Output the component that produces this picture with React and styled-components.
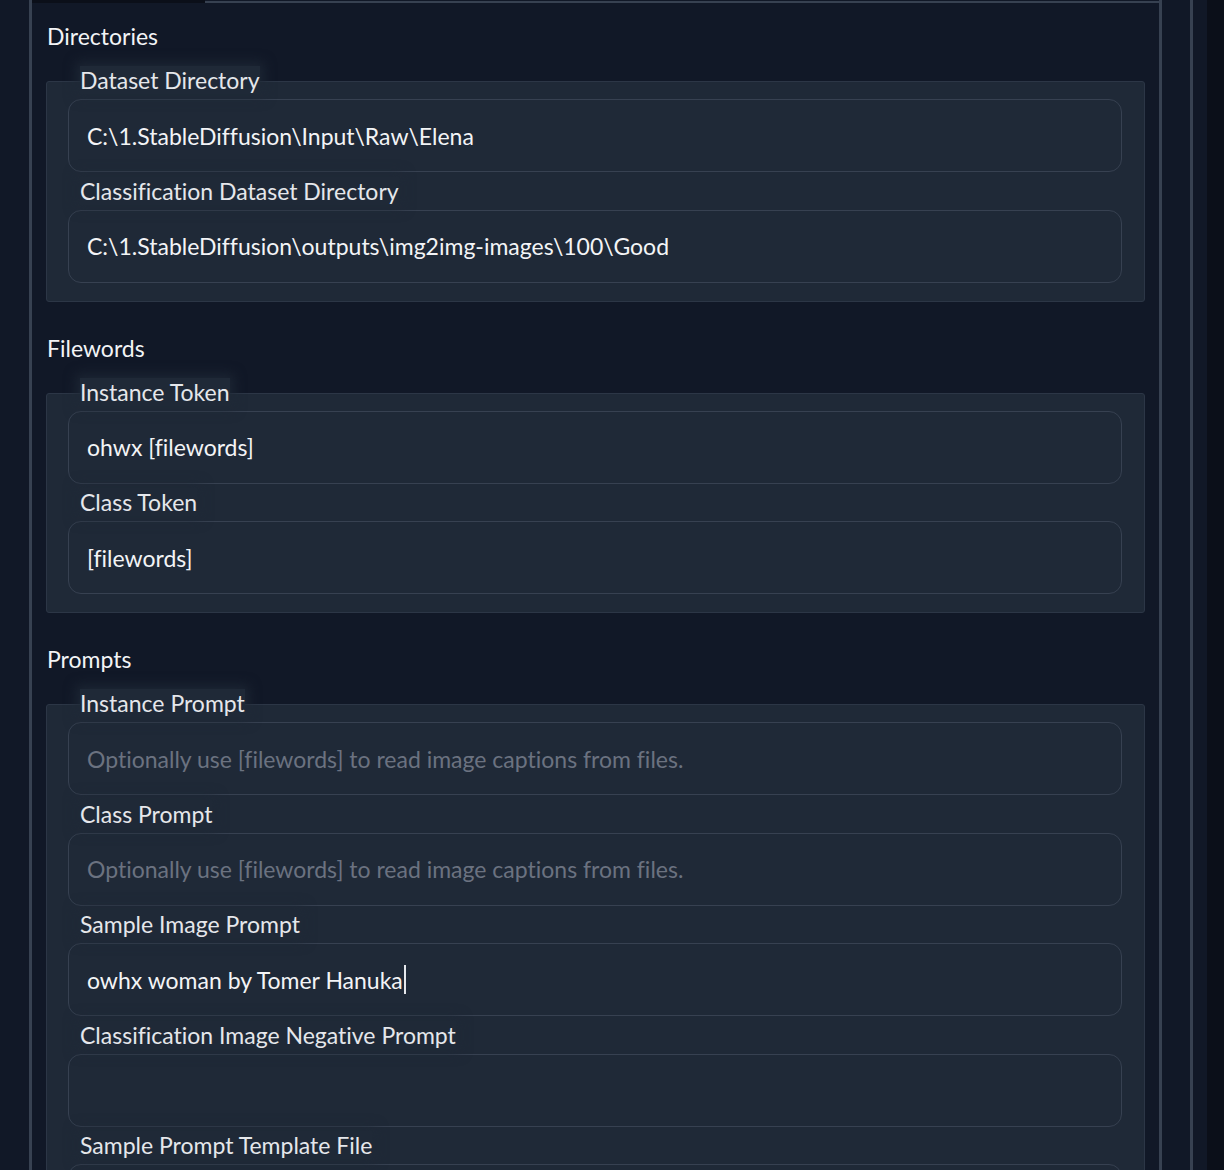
import React from 'react'
import styled, { createGlobalStyle } from 'styled-components'

const GlobalStyle = createGlobalStyle`
  html, body {
    margin: 0;
    padding: 0;
    background: #0b0f19;
    overflow: hidden;
  }
  body {
    font-family: Lato, "Noto Sans", sans-serif;
    font-variant-ligatures: none;
    -webkit-font-smoothing: antialiased;
  }
`

const Shell = styled.div`
  width: 1207px;
  height: 1170px;
  background: #111827;
`

const Frame = styled.div`
  width: 1193px;
  height: 100%;
  box-sizing: border-box;
  padding: 0 28px 0 29px;
  border-right: 3px solid #374151;
`

const TabBody = styled.div`
  height: 100%;
  border-left: 3px solid #374151;
  border-right: 3px solid #374151;
`

const TabHeader = styled.div`
  display: flex;
  height: 3px;
`

const ActiveTab = styled.div`
  width: 173px;
  background: #0b0f19;
`

const TabRule = styled.div`
  flex: 1;
  margin-top: 1px;
  background: #374151;
`

const Content = styled.div`
  padding: 18px 14px 0;
`

const Section = styled.section`
  & + & {
    margin-top: 31px;
  }
`

const SectionTitle = styled.h2`
  margin: 0;
  padding-left: 1px;
  font-size: 23px;
  line-height: 30px;
  font-weight: 400;
  color: #f3f4f6;
`

const Panel = styled.div`
  margin-top: 30px;
  padding: 0 22px 18px 21px;
  background: #1f2937;
  border: 1px solid #2c3646;
  border-radius: 3px;
`

const Field = styled.div``

const LabelRow = styled.div`
  display: flex;
  align-items: center;
  height: 37.5px;
  padding-left: 12px;

  ${Field}:first-child > & {
    margin-top: -20.5px;
  }
`

const LabelText = styled.span`
  line-height: 28px;
  font-size: 23px;
  color: #e5e7eb;
  background: #1f2937;
  box-shadow: 0 0 12px 4px rgba(31, 41, 55, 0.8);
`

const TextBox = styled.div`
  height: 73px;
  box-sizing: border-box;
  display: flex;
  align-items: center;
  padding: 0 18px;
  background: #1f2937;
  border: 1px solid #374151;
  border-radius: 13px;
  font-size: 23px;
  white-space: pre;
  color: ${p => (p.$placeholder ? '#6b7280' : '#f3f4f6')};
`

const Caret = styled.span`
  width: 2px;
  height: 29px;
  margin-left: 1px;
  background: #e5e7eb;
`

const PLACEHOLDER = 'Optionally use [filewords] to read image captions from files.'

const sections = [
  {
    title: 'Directories',
    fields: [
      { label: 'Dataset Directory', value: 'C:\\1.StableDiffusion\\Input\\Raw\\Elena' },
      { label: 'Classification Dataset Directory', value: 'C:\\1.StableDiffusion\\outputs\\img2img-images\\100\\Good' },
    ],
  },
  {
    title: 'Filewords',
    fields: [
      { label: 'Instance Token', value: 'ohwx [filewords]' },
      { label: 'Class Token', value: '[filewords]' },
    ],
  },
  {
    title: 'Prompts',
    fields: [
      { label: 'Instance Prompt', placeholder: PLACEHOLDER },
      { label: 'Class Prompt', placeholder: PLACEHOLDER },
      { label: 'Sample Image Prompt', value: 'owhx woman by Tomer Hanuka', focused: true },
      { label: 'Classification Image Negative Prompt', value: '' },
      { label: 'Sample Prompt Template File', value: '' },
    ],
  },
]

function TextField({ label, value, placeholder, focused }) {
  const empty = !value
  return (
    <Field>
      <LabelRow>
        <LabelText>{label}</LabelText>
      </LabelRow>
      <TextBox $placeholder={empty && !!placeholder}>
        {empty ? placeholder : value}
        {focused && <Caret />}
      </TextBox>
    </Field>
  )
}

export default function App() {
  return (
    <>
      <GlobalStyle />
      <Shell>
        <Frame>
          <TabBody>
            <TabHeader>
              <ActiveTab />
              <TabRule />
            </TabHeader>
            <Content>
              {sections.map(s => (
                <Section key={s.title}>
                  <SectionTitle>{s.title}</SectionTitle>
                  <Panel>
                    {s.fields.map(f => (
                      <TextField key={f.label} {...f} />
                    ))}
                  </Panel>
                </Section>
              ))}
            </Content>
          </TabBody>
        </Frame>
      </Shell>
    </>
  )
}
